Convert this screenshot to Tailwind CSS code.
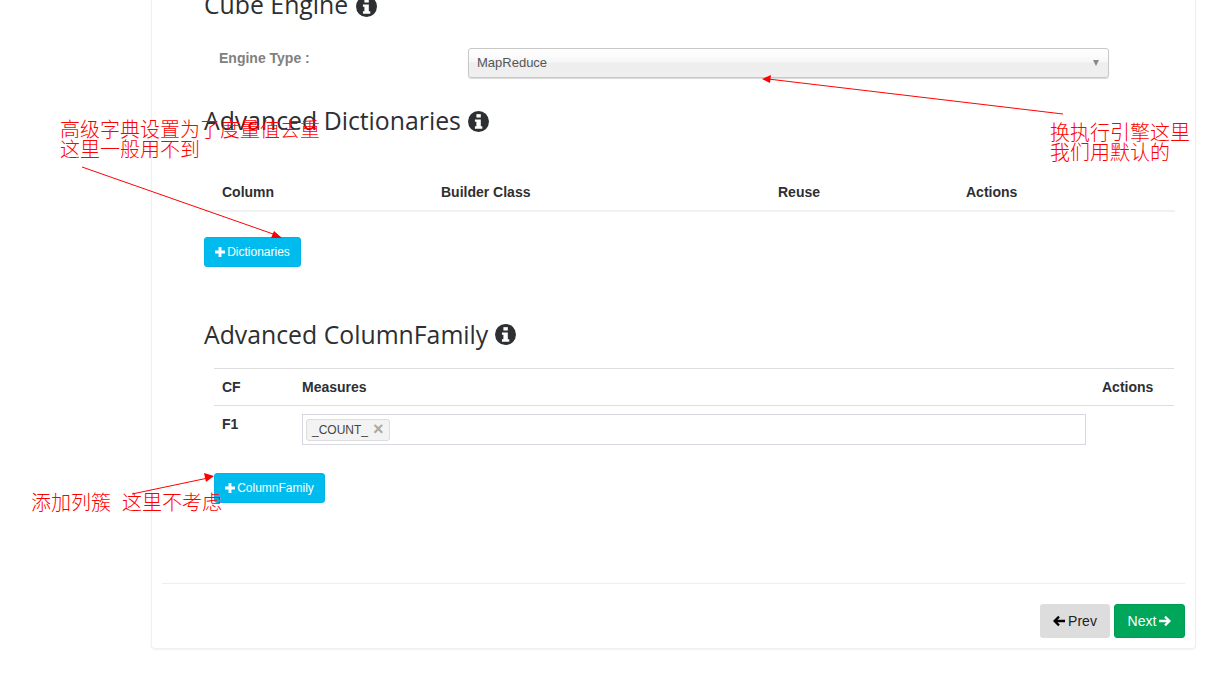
<!DOCTYPE html>
<html lang="en">
<head>
    <meta charset="UTF-8">
    <meta name="viewport" content="width=device-width, initial-scale=1.0">
    <title>Cube Designer</title>
    <script src="https://cdn.jsdelivr.net/npm/@tailwindcss/browser@4"></script>
</head>
<body class="bg-white h-[676px] overflow-hidden relative font-['Liberation_Sans',Arial,sans-serif] text-[#2d2f33]">
    <!-- card -->
    <div class="ml-[151px] w-[1045px] h-[649px] border border-t-0 border-[#f0f0f0] rounded-b shadow-[0_1px_2px_rgba(0,0,0,0.05)] pl-[10px] pr-[10px] flex flex-col">
        <div class="pl-[42px] pr-[10px] flex flex-col">
            <h3 class="h-[20px] flex items-end gap-[8px] font-['Open_Sans',sans-serif] text-[24.8px] leading-[34px] text-[#2d2f33] whitespace-nowrap">
                <span class="h-[34px] block shrink-0 translate-y-[1px]">Cube Engine</span>
                <svg class="w-[21px] h-[21px] mb-[3px] shrink-0" viewBox="0 0 20 20"><circle cx="10" cy="10" r="10" fill="#2d2f33"/><rect x="8" y="3" width="4.2" height="3.2" fill="#fff"/><path d="M6.6 8h5.6v6.6h1.4v2.2H6.6v-2.2H8v-4.4H6.6z" fill="#fff"/></svg>
            </h3>

            <div class="flex mt-[28px] h-[30px]">
                <label class="w-[264px] pl-[15px] pt-[2px] text-[14px] leading-[17px] font-bold text-[#808080]">Engine Type :</label>
                <div class="w-[641px] h-[30px] border border-[#c8c8c8] rounded-[3px] shadow-[0_1px_1px_rgba(0,0,0,0.15)] bg-[linear-gradient(#ffffff_0%,#f7f7f7_45%,#eeeeee_50%,#efefef_100%)] flex items-center justify-between pl-[8px] pr-[9px] text-[13px] text-[#555555]">
                    <span>MapReduce</span>
                    <span class="w-0 h-0 border-x-[3.5px] border-x-transparent border-t-[6px] border-t-[#888888]"></span>
                </div>
            </div>

            <h3 class="mt-[26px] h-[34px] flex items-center gap-[7px] font-['Open_Sans',sans-serif] text-[24.8px] leading-[34px]">
                <span class="-translate-y-[1px]">Advanced Dictionaries</span>
                <svg class="w-[21px] h-[21px] shrink-0" viewBox="0 0 20 20"><circle cx="10" cy="10" r="10" fill="#2d2f33"/><rect x="8" y="3" width="4.2" height="3.2" fill="#fff"/><path d="M6.6 8h5.6v6.6h1.4v2.2H6.6v-2.2H8v-4.4H6.6z" fill="#fff"/></svg>
            </h3>

            <div class="mt-[37px] h-[37px] border-b-2 border-[#f1f1f1] grid grid-cols-[219px_337px_188px_1fr] pl-[18px] pt-[9px] text-[14px] leading-[17px] font-bold">
                <div>Column</div>
                <div>Builder Class</div>
                <div>Reuse</div>
                <div>Actions</div>
            </div>

            <button class="mt-[25px] w-[97px] h-[30px] rounded-[3px] bg-[#00bcee] border border-[#00b4e4] text-white text-[12px] flex items-center justify-center gap-[2px]">
                <svg class="w-[10px] h-[10px]" viewBox="0 0 9 9"><path d="M3.2 0h2.6v3.2H9v2.6H5.8V9H3.2V5.8H0V3.2h3.2z" fill="#fff"/></svg>
                Dictionaries
            </button>

            <h3 class="mt-[50px] h-[34px] flex items-center gap-[7px] font-['Open_Sans',sans-serif] text-[24.8px] leading-[34px]">
                <span>Advanced ColumnFamily</span>
                <svg class="w-[21px] h-[21px] shrink-0" viewBox="0 0 20 20"><circle cx="10" cy="10" r="10" fill="#2d2f33"/><rect x="8" y="3" width="4.2" height="3.2" fill="#fff"/><path d="M6.6 8h5.6v6.6h1.4v2.2H6.6v-2.2H8v-4.4H6.6z" fill="#fff"/></svg>
            </h3>

            <div class="ml-[10px] w-[960px] mt-[17px] border-t border-[#dddddd]">
                <div class="h-[37px] border-b border-[#dddddd] grid grid-cols-[80px_800px_1fr] pl-[8px] items-center text-[14px] font-bold">
                    <div>CF</div>
                    <div>Measures</div>
                    <div>Actions</div>
                </div>
                <div class="grid grid-cols-[80px_800px_1fr] pl-[8px] pt-[8px] text-[14px] font-bold">
                    <div class="leading-[20px]">F1</div>
                    <div class="w-[784px] h-[31px] border border-[#d5d8e0] flex items-start pt-[4px] pl-[3px] font-normal">
                        <div class="h-[22px] w-[84px] border border-[#dddddd] bg-[#f3f3f3] rounded-[3px] flex items-center gap-[5px] pl-[5px] text-[12px] text-[#444444]">
                            <span>_COUNT_</span>
                            <span class="text-[#aaaaaa] text-[18px] leading-[16px] font-bold -mt-[3px]">×</span>
                        </div>
                    </div>
                    <div></div>
                </div>
            </div>

            <button class="ml-[10px] mt-[28px] w-[111px] h-[30px] rounded-[3px] bg-[#00bcee] border border-[#00b4e4] text-white text-[12px] flex items-center justify-center gap-[2px]">
                <svg class="w-[10px] h-[10px]" viewBox="0 0 9 9"><path d="M3.2 0h2.6v3.2H9v2.6H5.8V9H3.2V5.8H0V3.2h3.2z" fill="#fff"/></svg>
                ColumnFamily
            </button>
        </div>

        <div class="mt-[80px] border-t border-[#eeeeee] pt-[20px] flex justify-end gap-[4px]">
            <button class="w-[70px] h-[34px] rounded-[3px] bg-[#dddddd] text-[#222222] text-[14px] flex items-center justify-center gap-[3px]">
                <svg class="w-[12px] h-[12px]" viewBox="0 0 12 11"><path d="M0 5.5L5.2 0.3 6.8 1.9 4.4 4.2H12v2.6H4.4l2.4 2.3-1.6 1.6z" fill="#000"/></svg>
                Prev
            </button>
            <button class="w-[71px] h-[34px] rounded-[3px] bg-[#00a65a] border border-[#009c54] text-white text-[14px] flex items-center justify-center gap-[3px]">
                Next
                <svg class="w-[12px] h-[12px]" viewBox="0 0 12 11"><path d="M12 5.5L6.8 0.3 5.2 1.9 7.6 4.2H0v2.6h7.6L5.2 9.1l1.6 1.6z" fill="#fff"/></svg>
            </button>
        </div>
    </div>

    <!-- red annotations drawn over the screenshot -->
    <svg class="absolute left-0 top-0 pointer-events-none" width="1213" height="676" viewBox="0 0 1213 676">
        <g stroke="#ff0000" stroke-width="1" fill="none">
            <line x1="1063" y1="114" x2="768" y2="79"/>
            <line x1="82" y1="167" x2="276" y2="235"/>
            <line x1="132" y1="494" x2="208" y2="478"/>
        </g>
        <g fill="#ff0000">
            <polygon points="762,79 771,75 770,83"/>
            <polygon points="282,238 271,238 274,231"/>
            <polygon points="214,476 204,473 206,482"/>
        </g>
    </svg>
    <div class="absolute left-[60px] top-[119px] text-[20px] leading-[20px] text-[#ff0000] font-['Noto_Sans_CJK_SC',sans-serif] font-light whitespace-nowrap">高级字典设置为了度量值去重<br>这里一般用不到</div>
    <div class="absolute left-[1050px] top-[122px] text-[20px] leading-[20px] text-[#ff0000] font-['Noto_Sans_CJK_SC',sans-serif] font-light whitespace-nowrap">换执行引擎这里<br>我们用默认的</div>
    <div class="absolute left-[31px] top-[492px] text-[20px] leading-[20px] text-[#ff0000] font-['Noto_Sans_CJK_SC',sans-serif] font-light whitespace-nowrap">添加列簇<span class="ml-[11px]">这里不考虑</span></div>
</body>
</html>
